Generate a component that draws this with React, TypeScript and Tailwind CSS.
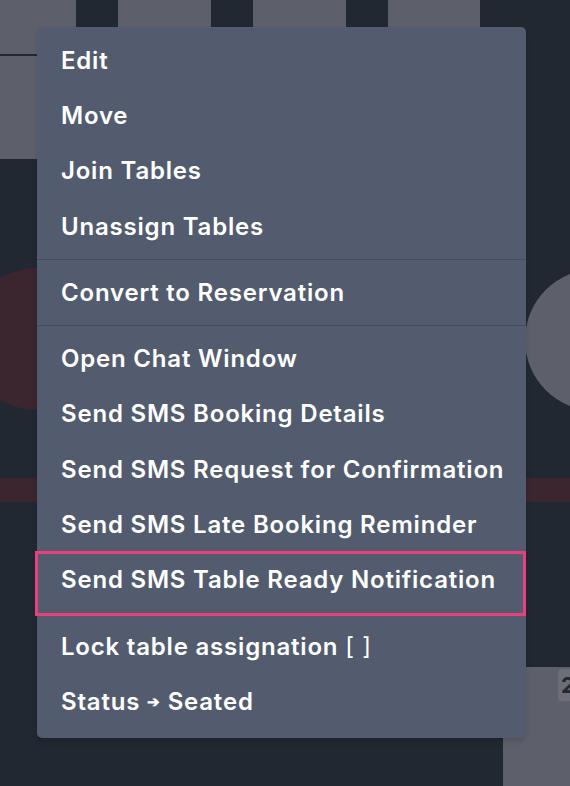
import { ReactNode } from 'react'

type Item = { label: ReactNode; highlighted?: boolean }

const groups: Item[][] = [
  [{ label: 'Edit' }, { label: 'Move' }, { label: 'Join Tables' }, { label: 'Unassign Tables' }],
  [{ label: 'Convert to Reservation' }],
  [
    { label: 'Open Chat Window' },
    { label: 'Send SMS Booking Details' },
    { label: 'Send SMS Request for Confirmation' },
    { label: 'Send SMS Late Booking Reminder' },
    { label: 'Send SMS Table Ready Notification', highlighted: true },
  ],
  [
    {
      label: (
        <>
          Lock table assignation <span className="font-normal">[ ]</span>
        </>
      ),
    },
    {
      label: (
        <>
          Status <span className="text-[15px] align-[3px]">➔</span> Seated
        </>
      ),
    },
  ],
]

// floor plan behind the menu
function FloorPlan() {
  return (
    <div className="absolute inset-0 overflow-hidden bg-[#222831]">
      <div className="absolute left-0 top-0 w-[76px] h-[159px] bg-[#5d5f6a]" />
      <div className="absolute left-0 top-[54px] w-[40px] h-[2px] bg-[#222831]" />
      <div className="absolute left-[118px] top-0 w-[93px] h-[27px] bg-[#5d5f6a]" />
      <div className="absolute left-[253px] top-0 w-[93px] h-[27px] bg-[#5d5f6a]" />
      <div className="absolute left-[388px] top-0 w-[92px] h-[27px] bg-[#5d5f6a]" />
      <div className="absolute left-[-34px] top-[268px] w-[142px] h-[142px] rounded-full bg-[#3b2630]" />
      <div className="absolute left-0 top-[478px] w-[570px] h-[24px] bg-[#3b2630]" />
      <div className="absolute left-[525px] top-[269px] w-[142px] h-[142px] rounded-full bg-[#5d5f6a]" />
      <div className="absolute left-[503px] top-[667px] w-[67px] h-[119px] bg-[#5d5f6a]" />
      <div className="absolute left-[558px] top-[669px] w-[30px] h-[32px] rounded-[4px] bg-[#6b6e79] pl-[3px] text-[22px] leading-[32px] font-bold text-[#222831]">
        2
      </div>
    </div>
  )
}

export default function App() {
  return (
    <div className="relative w-[570px] h-[786px] overflow-hidden" style={{ fontFamily: 'Inter, "Noto Sans", sans-serif' }}>
      <FloorPlan />
      <div className="absolute left-[37px] top-[27px] w-[489px] rounded-[5px] bg-[#535c6e] shadow-md pt-[1px] pb-[3px]">
        {groups.map((group, gi) => (
          <div key={gi} className={`flex flex-col py-[5px] ${gi > 0 ? 'border-t border-[#454c5c]' : ''}`}>
            {group.map((item, ii) => (
              <div
                key={ii}
                className="relative h-[55.3px] flex items-center px-6 text-[24px] font-semibold tracking-[0.8px] text-white whitespace-nowrap"
              >
                <span>{item.label}</span>
                {item.highlighted && (
                  <div className="absolute left-[-2px] right-0 top-[-2px] bottom-[-8px] border-[3px] border-[#e8407f]" />
                )}
              </div>
            ))}
          </div>
        ))}
      </div>
    </div>
  )
}
